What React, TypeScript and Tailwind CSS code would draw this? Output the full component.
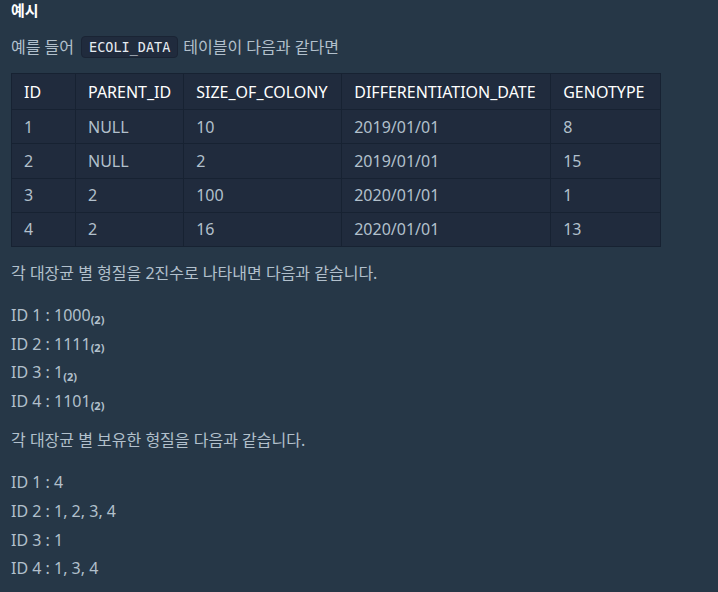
const rows = [
  ["1", "NULL", "10", "2019/01/01", "8"],
  ["2", "NULL", "2", "2019/01/01", "15"],
  ["3", "2", "100", "2020/01/01", "1"],
  ["4", "2", "16", "2020/01/01", "13"],
];

const headers = ["ID", "PARENT_ID", "SIZE_OF_COLONY", "DIFFERENTIATION_DATE", "GENOTYPE"];
const colW = ["w-[64px]", "w-[108px]", "w-[158px]", "w-[209px]", "w-[110px]"];

const binary = ["ID 1 : 1000", "ID 2 : 1111", "ID 3 : 1", "ID 4 : 1101"];

const owned = ["ID 1 : 4", "ID 2 : 1, 2, 3, 4", "ID 3 : 1", "ID 4 : 1, 3, 4"];

export default function App() {
  return (
    <div
      className="min-h-screen w-full bg-[#263747] text-[#b2c0cc] px-[11px] text-[16px]"
      style={{ fontFamily: '"Noto Sans", "Noto Sans CJK KR", sans-serif' }}
    >
      <h5 className="font-bold text-white text-[15px] leading-[20px]">예시</h5>

      <p className="mt-[15px] leading-[24px] flex items-center">
        예를 들어
        <code
          className="ml-[7px] mr-[5px] px-[7px] h-[22px] inline-flex items-center rounded-[4px] bg-[#202b3d] border border-[#1a2434] text-[13.5px] text-[#e6ecf2]"
          style={{ fontFamily: '"DejaVu Sans Mono", monospace' }}
        >
          ECOLI_DATA
        </code>
        테이블이 다음과 같다면
      </p>

      <table className="mt-[14px] border-collapse bg-[#202b3d] border border-[#172232]">
        <thead>
          <tr className="h-[36px]">
            {headers.map((h, i) => (
              <th
                key={h}
                className={`${colW[i]} text-left font-normal text-white px-[12px] border border-[#172232]`}
              >
                {h}
              </th>
            ))}
          </tr>
        </thead>
        <tbody>
          {rows.map((r) => (
            <tr key={r[0]} className="h-[34.25px]">
              {r.map((c, i) => (
                <td key={i} className="px-[12px] border border-[#172232]">
                  {c}
                </td>
              ))}
            </tr>
          ))}
        </tbody>
      </table>

      <p className="mt-[14px] leading-[24px]">각 대장균 별 형질을 2진수로 나타내면 다음과 같습니다.</p>

      <div className="mt-[16px] leading-[28.6px]">
        {binary.map((t) => (
          <div key={t}>
            {t}
            <sub className="text-[11px] font-bold">(2)</sub>
          </div>
        ))}
      </div>

      <p className="mt-[13px] leading-[24px]">각 대장균 별 보유한 형질을 다음과 같습니다.</p>

      <div className="mt-[16px] leading-[28.6px]">
        {owned.map((t) => (
          <div key={t}>{t}</div>
        ))}
      </div>
    </div>
  );
}
